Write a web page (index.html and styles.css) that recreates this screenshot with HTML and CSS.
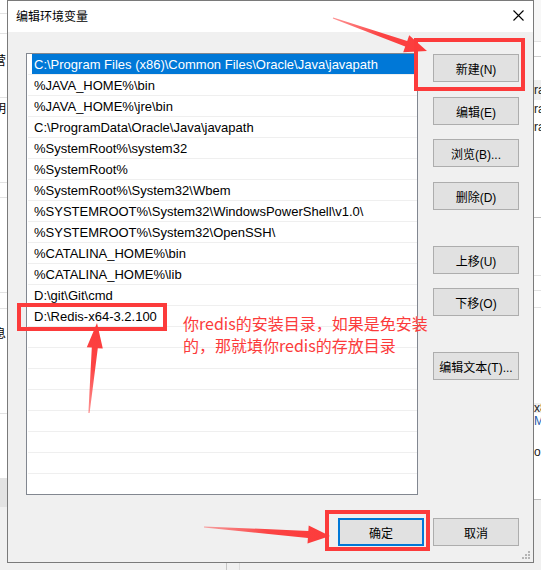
FILE: index.html
```html
<!DOCTYPE html>
<html lang="zh-CN">
<head>
<meta charset="utf-8">
<title>编辑环境变量</title>
<link rel="stylesheet" href="styles.css">
</head>
<body>
<div class="desk">
  <div class="bgwin bg-left">
    <div class="seg s-a"></div>
    <div class="seg s-b"></div>
    <div class="seg s-c"><span class="frag">营</span></div>
    <div class="seg s-d"><span class="frag">明</span></div>
    <div class="seg s-e"></div>
    <div class="seg s-f"></div>
    <div class="seg s-g"></div>
    <div class="seg s-h"><span class="frag">息</span></div>
    <div class="seg s-i"></div>
    <div class="seg s-j"></div>
  </div>
  <div class="bgwin bg-right">
    <div class="rseg r-a"></div>
    <div class="rseg r-b"></div>
    <div class="rseg r-c"></div>
    <div class="rseg r-c2"><span class="rtxt">ram</span></div>
    <div class="rseg r-d"><span class="rtxt">ram</span><span class="rtxt">ram</span></div>
    <div class="rseg r-e"></div>
    <div class="rseg r-f"></div>
    <div class="rseg r-g"></div>
    <div class="rseg r-h"></div>
    <div class="rseg r-i"><span class="rtxt">x86</span></div>
    <div class="rseg r-k"><span class="rtxt blue">Mi</span><span class="rtxt gap">o</span></div>
    <div class="rseg r-l"></div>
  </div>
  <div class="bgwin bg-bottom"></div>

  <div class="dialog">
    <div class="titlebar">
      <span class="title">编辑环境变量</span>
      <svg class="close" width="11" height="11" viewBox="0 0 11 11"><path d="M0.5 0.5 L10.5 10.5 M10.5 0.5 L0.5 10.5" stroke="#000" stroke-width="1.1" fill="none"/></svg>
    </div>
    <div class="content">
      <div class="main">
        <div class="list">
          <div class="row sel">C:\Program Files (x86)\Common Files\Oracle\Java\javapath</div>
          <div class="row">%JAVA_HOME%\bin</div>
          <div class="row">%JAVA_HOME%\jre\bin</div>
          <div class="row">C:\ProgramData\Oracle\Java\javapath</div>
          <div class="row">%SystemRoot%\system32</div>
          <div class="row">%SystemRoot%</div>
          <div class="row">%SystemRoot%\System32\Wbem</div>
          <div class="row">%SYSTEMROOT%\System32\WindowsPowerShell\v1.0\</div>
          <div class="row">%SYSTEMROOT%\System32\OpenSSH\</div>
          <div class="row">%CATALINA_HOME%\bin</div>
          <div class="row">%CATALINA_HOME%\lib</div>
          <div class="row">D:\git\Git\cmd</div>
          <div class="row">D:\Redis-x64-3.2.100</div>
          <div class="row"></div>
          <div class="row"></div>
          <div class="row"></div>
          <div class="row"></div>
          <div class="row"></div>
          <div class="row"></div>
          <div class="row"></div>
          <div class="row"></div>
        </div>
        <div class="side">
          <div class="btn">新建(N)</div>
          <div class="btn m15">编辑(E)</div>
          <div class="btn m14">浏览(B)...</div>
          <div class="btn m15">删除(D)</div>
          <div class="btn m36">上移(U)</div>
          <div class="btn m14">下移(O)</div>
          <div class="btn m36">编辑文本(T)...</div>
        </div>
      </div>
      <div class="footer">
        <div class="btn default">确定</div>
        <div class="btn">取消</div>
      </div>
    </div>
    <svg class="grip" width="10" height="10" viewBox="0 0 10 10">
      <rect x="7" y="1" width="2" height="2" fill="#b5b5b5"/>
      <rect x="4" y="4" width="2" height="2" fill="#b5b5b5"/>
      <rect x="7" y="4" width="2" height="2" fill="#b5b5b5"/>
      <rect x="1" y="7" width="2" height="2" fill="#b5b5b5"/>
      <rect x="4" y="7" width="2" height="2" fill="#b5b5b5"/>
      <rect x="7" y="7" width="2" height="2" fill="#b5b5b5"/>
    </svg>
  </div>

  <div class="mark mark-new"></div>
  <div class="mark mark-redis"></div>
  <div class="mark mark-ok"></div>
  <div class="note">你redis的安装目录，如果是免安装<br>的，那就填你redis的存放目录</div>

  <svg class="arrows" width="541" height="570" viewBox="0 0 541 570">
    <defs>
      <linearGradient id="g1" gradientUnits="userSpaceOnUse" x1="333" y1="18" x2="427" y2="51">
        <stop offset="0" stop-color="#fc3b3b" stop-opacity="0.55"/>
        <stop offset="0.5" stop-color="#fc3b3b" stop-opacity="0.95"/>
        <stop offset="1" stop-color="#fc3b3b"/>
      </linearGradient>
      <linearGradient id="g2" gradientUnits="userSpaceOnUse" x1="89" y1="413" x2="97" y2="323">
        <stop offset="0" stop-color="#fc3b3b" stop-opacity="0.55"/>
        <stop offset="0.5" stop-color="#fc3b3b" stop-opacity="0.95"/>
        <stop offset="1" stop-color="#fc3b3b"/>
      </linearGradient>
      <linearGradient id="g3" gradientUnits="userSpaceOnUse" x1="204" y1="527" x2="330" y2="536">
        <stop offset="0" stop-color="#fc3b3b" stop-opacity="0.45"/>
        <stop offset="0.5" stop-color="#fc3b3b" stop-opacity="0.95"/>
        <stop offset="1" stop-color="#fc3b3b"/>
      </linearGradient>
    </defs>
    <polygon fill="url(#g1)" points="333.2,17.4 407.2,40.9 409.2,35.2 427,51 403.2,52.2 405.2,46.5 332.8,18.6"/>
    <polygon fill="url(#g2)" points="89.6,413 97.8,348.2 102.8,348.6 97,323 86.8,347.2 91.8,347.6 88.4,413"/>
    <polygon fill="url(#g3)" points="204.05,526.4 308.3,530.9 308.7,525.4 330,536 307.5,543.4 307.9,537.9 203.95,527.6"/>
  </svg>
</div>
</body>
</html>
```

FILE: styles.css
```css
html, body {
  margin: 0;
  padding: 0;
}
body {
  background: #f0f0f0;
  overflow: hidden;
  font-family: "Liberation Sans", "Noto Sans CJK SC", sans-serif;
  font-size: 12px;
  color: #000;
}
.desk {
  position: relative;
  width: 541px;
  height: 570px;
  overflow: hidden;
}

/* background windows */
.bgwin {
  position: absolute;
}
.bg-left {
  left: -60px;
  top: 0;
  width: 68px;
  background: #fff;
  display: flex;
  flex-direction: column;
}
.seg {
  border-bottom: 1px solid #e3e3e3;
  text-align: right;
  line-height: 14px;
  font-family: "Noto Sans CJK SC", sans-serif;
  overflow: hidden;
}
.frag { display: block; padding-right: 2px; }
.s-a { height: 13px; }
.s-b { height: 19px; }
.s-c { height: 63px; }
.s-c .frag { padding-top: 19px; }
.s-d { height: 84px; }
.s-d .frag { padding-top: 3px; }
.s-e { height: 14px; }
.s-f { height: 94px; }
.s-g { height: 15px; }
.s-h { height: 104px; }
.s-h .frag { padding-top: 17px; }
.s-i { height: 64px; border-bottom: 0; }
.s-j { height: 29px; background: #e3e3e3; border-bottom: 0; }

.bg-right {
  left: 533px;
  top: 0;
  width: 60px;
  background: #fff;
  display: flex;
  flex-direction: column;
}
.rseg {
  flex: none;
  border-bottom: 1px solid #e3e3e3;
  display: flex;
  flex-direction: column;
  line-height: 18px;
  padding-left: 1px;
  overflow: hidden;
}
.rtxt { display: block; color: #1a1a1a; }
.rtxt.blue { color: #1e5aa8; }
.rtxt.gap { margin-top: 15px; }
.r-a { height: 41px; background: #f7f7f7; }
.r-b { height: 14px; border-bottom-color: #cfcfcf; }
.r-c { height: 23px; border-bottom: 0; }
.r-c2 { height: 20px; background: #efefef; border-bottom: 0; line-height: 20px; }
.r-d { height: 117px; border-bottom-color: #bdbdbd; }
.r-e { height: 57px; }
.r-f { height: 14px; }
.r-g { height: 16px; }
.r-h { height: 95px; border-bottom: 0; }
.r-i { height: 10px; background: #efefef; line-height: 14px; justify-content: center; border-bottom: 0; }
.r-k { height: 86px; border-bottom-color: #bdbdbd; line-height: 16px; }
.r-l { height: 80px; background: #f0f0f0; border-bottom: 0; }

.bg-bottom {
  left: 226px;
  top: 550px;
  width: 12px;
  height: 30px;
  border-left: 1px solid #c4c4c4;
  border-right: 1px solid #dcdcdc;
}

/* dialog */
.dialog {
  position: absolute;
  left: 7px;
  top: 0;
  width: 527px;
  height: 563px;
  box-sizing: border-box;
  border: 1px solid #7a7a7a;
  background: #f0f0f0;
  display: flex;
  flex-direction: column;
}
.titlebar {
  height: 30px;
  background: #fff;
  display: flex;
  align-items: center;
  justify-content: space-between;
  padding: 0 9px 1px 8px;
  flex: none;
}
.title {
  font-family: "Noto Sans CJK SC", sans-serif;
  font-size: 12px;
  line-height: 16px;
}
.close {
  display: block;
  margin-top: -1px;
}
.content {
  padding: 21px 14px 0 18px;
  display: flex;
  flex-direction: column;
}
.main {
  display: flex;
  align-items: flex-start;
}
.list {
  width: 392px;
  height: 442px;
  box-sizing: border-box;
  border: 1px solid #828790;
  background: #fff;
  padding-left: 1px;
  overflow: hidden;
}
.row {
  height: 18px;
  line-height: 18px;
  padding: 2px 0 0 6px;
  border-bottom: 1px solid #efefef;
  white-space: nowrap;
  overflow: hidden;
  font-size: 13px;
}
.row.sel {
  background: linear-gradient(to right, transparent 4px, #0078d7 4px);
  color: #fff;
}
.side {
  margin-left: 15px;
  margin-top: 1px;
  display: flex;
  flex-direction: column;
}
.btn {
  width: 86px;
  height: 28px;
  box-sizing: border-box;
  border: 1px solid #adadad;
  background: #e1e1e1;
  display: flex;
  align-items: center;
  justify-content: center;
  font-size: 12px;
  white-space: nowrap;
}
.m14 { margin-top: 14px; }
.m15 { margin-top: 15px; }
.m36 { margin-top: 36px; }
.footer {
  display: flex;
  justify-content: flex-end;
  gap: 9px;
  margin-top: 23px;
}
.btn.default {
  border: 2px solid #0078d7;
}
.grip {
  position: absolute;
  right: 2px;
  bottom: 2px;
}

/* annotations */
.mark {
  position: absolute;
  box-sizing: border-box;
  border: 4px solid #fc3b3b;
}
.mark-new { left: 414px; top: 38px; width: 111px; height: 53px; }
.mark-redis { left: 17px; top: 303px; width: 150px; height: 28px; }
.mark-ok { left: 325px; top: 510px; width: 105px; height: 41px; }
.note {
  position: absolute;
  left: 183px;
  top: 312px;
  font-family: "Noto Sans CJK SC", sans-serif;
  font-size: 16px;
  line-height: 22px;
  color: #fc3b3b;
  white-space: nowrap;
}
.arrows {
  position: absolute;
  left: 0;
  top: 0;
  pointer-events: none;
}
```
